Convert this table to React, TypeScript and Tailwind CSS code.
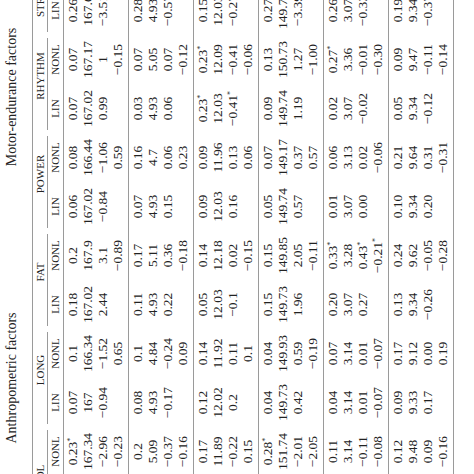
import React from 'react';

// values per row group: [column][row], columns run VOL NONL .. STR LIN
const groups: string[][][] = [
  [
    ['0.23*', '167.34', '−2.96', '−0.23'],
    ['0.07', '167', '−0.94', ''],
    ['0.1', '166.34', '−1.52', '0.65'],
    ['0.18', '167.02', '2.44', ''],
    ['0.2', '167.9', '3.1', '−0.89'],
    ['0.06', '167.02', '−0.84', ''],
    ['0.08', '166.44', '−1.06', '0.59'],
    ['0.07', '167.02', '0.99', ''],
    ['0.07', '167.17', '1', '−0.15'],
    ['0.26', '167.6', '−3.51', ''],
  ],
  [
    ['0.2', '5.09', '−0.37', '−0.16'],
    ['0.08', '4.93', '−0.17', ''],
    ['0.1', '4.84', '−0.24', '0.09'],
    ['0.11', '4.93', '0.22', ''],
    ['0.17', '5.11', '0.36', '−0.18'],
    ['0.07', '4.93', '0.15', ''],
    ['0.16', '4.7', '0.06', '0.23'],
    ['0.03', '4.93', '0.06', ''],
    ['0.07', '5.05', '0.07', '−0.12'],
    ['0.28', '4.93', '−0.57', ''],
  ],
  [
    ['0.17', '11.89', '−0.22', '0.15'],
    ['0.12', '12.02', '0.2', ''],
    ['0.14', '11.92', '0.11', '0.1'],
    ['0.05', '12.03', '−0.1', ''],
    ['0.14', '12.18', '0.02', '−0.15'],
    ['0.09', '12.03', '0.16', ''],
    ['0.09', '11.96', '0.13', '0.06'],
    ['0.23*', '12.03', '−0.41*', ''],
    ['0.23*', '12.09', '−0.41', '−0.06'],
    ['0.15', '12.03', '−0.27', ''],
  ],
  [
    ['0.28*', '151.74', '−2.01', '−2.05'],
    ['0.04', '149.73', '0.42', ''],
    ['0.04', '149.93', '0.59', '−0.19'],
    ['0.15', '149.73', '1.96', ''],
    ['0.15', '149.85', '2.05', '−0.11'],
    ['0.05', '149.74', '0.57', ''],
    ['0.07', '149.17', '0.37', '0.57'],
    ['0.09', '149.74', '1.19', ''],
    ['0.13', '150.73', '1.27', '−1.00'],
    ['0.27', '149.74', '−3.39', ''],
  ],
  [
    ['0.11', '3.14', '−0.11', '−0.08'],
    ['0.04', '3.14', '0.01', '−0.07'],
    ['0.07', '3.14', '0.01', '−0.07'],
    ['0.20', '3.07', '0.27', ''],
    ['0.33*', '3.28', '0.43*', '−0.21*'],
    ['0.01', '3.07', '0.00', ''],
    ['0.06', '3.13', '0.02', '−0.06'],
    ['0.02', '3.07', '−0.02', ''],
    ['0.27*', '3.36', '−0.01', '−0.30'],
    ['0.26', '3.07', '−0.33', ''],
  ],
  [
    ['0.12', '9.48', '0.09', '−0.16'],
    ['0.09', '9.33', '0.17', ''],
    ['0.17', '9.12', '0.00', '0.19'],
    ['0.13', '9.34', '−0.26', ''],
    ['0.24', '9.62', '−0.05', '−0.28'],
    ['0.10', '9.34', '0.20', ''],
    ['0.21', '9.64', '0.31', '−0.31'],
    ['0.05', '9.34', '−0.12', ''],
    ['0.09', '9.47', '−0.11', '−0.14'],
    ['0.19', '9.34', '−0.37', ''],
  ],
];

const factorGroups = ['VOL', 'LONG', 'FAT', 'POWER', 'RHYTHM', 'STR'];

// header label offsets, the scan's headings sit a little off-centre
const headPad = ['text-center', 'pl-[16px] text-center', 'pl-[16px] text-center', 'pl-[16px] text-center', 'pl-[16px] text-center', 'pl-[15px] text-left'];

const Val = ({ v }: { v: string }) => {
  if (!v.endsWith('*')) return <>{v}</>;
  return (
    <>
      {v.slice(0, -1)}
      <span className="relative -top-[4px] text-[8px]">*</span>
    </>
  );
};

const App: React.FC = () => {
  return (
    <div className="w-[474px] h-[474px] overflow-hidden bg-white font-['Liberation_Serif',serif] text-[#222]">
      <div className="w-[588px] origin-top-left rotate-[-90deg] translate-y-[525px]">
        {/* title row */}
        <div className="flex h-[33px] border-b border-[#9a9a9a] text-[14px] leading-[16px]">
          <div className="w-[294px] pt-[4px] text-center">Anthropometric factors</div>
          <div className="w-[294px] pt-[4px] pr-[26px] text-center">Motor-endurance factors</div>
        </div>

        {/* factor groups */}
        <div className="flex h-[15px] text-[11px] leading-[14px]">
          {factorGroups.map((g, i) => (
            <div key={g} className="w-[98px] px-[3px]">
              <div className={`h-[15px] border-b border-[#9a9a9a] ${headPad[i]}`}>{g}</div>
            </div>
          ))}
        </div>

        {/* LIN / NONL */}
        <div className="flex h-[16px] border-b border-[#9a9a9a] text-[11px] leading-[15px]">
          {factorGroups.map((g) => (
            <React.Fragment key={g}>
              <div className="w-[49px] text-center">LIN</div>
              <div className="w-[49px] text-center">NONL</div>
            </React.Fragment>
          ))}
        </div>

        {groups.map((cols, gi) => (
          <div
            key={gi}
            className="grid grid-cols-[repeat(12,49px)] grid-rows-[16px_15px_15px_18px] border-b border-[#9a9a9a] text-[13.5px] leading-[15px]"
          >
            {[0, 1, 2, 3].map((r) => (
              <React.Fragment key={r}>
                <div />
                {cols.map((c, ci) => (
                  <div key={ci} className={`text-center whitespace-nowrap ${r === 0 ? 'pt-[1px]' : ''}`}>
                    <Val v={c[r]} />
                  </div>
                ))}
                <div />
              </React.Fragment>
            ))}
          </div>
        ))}
      </div>
    </div>
  );
};

export default App;
